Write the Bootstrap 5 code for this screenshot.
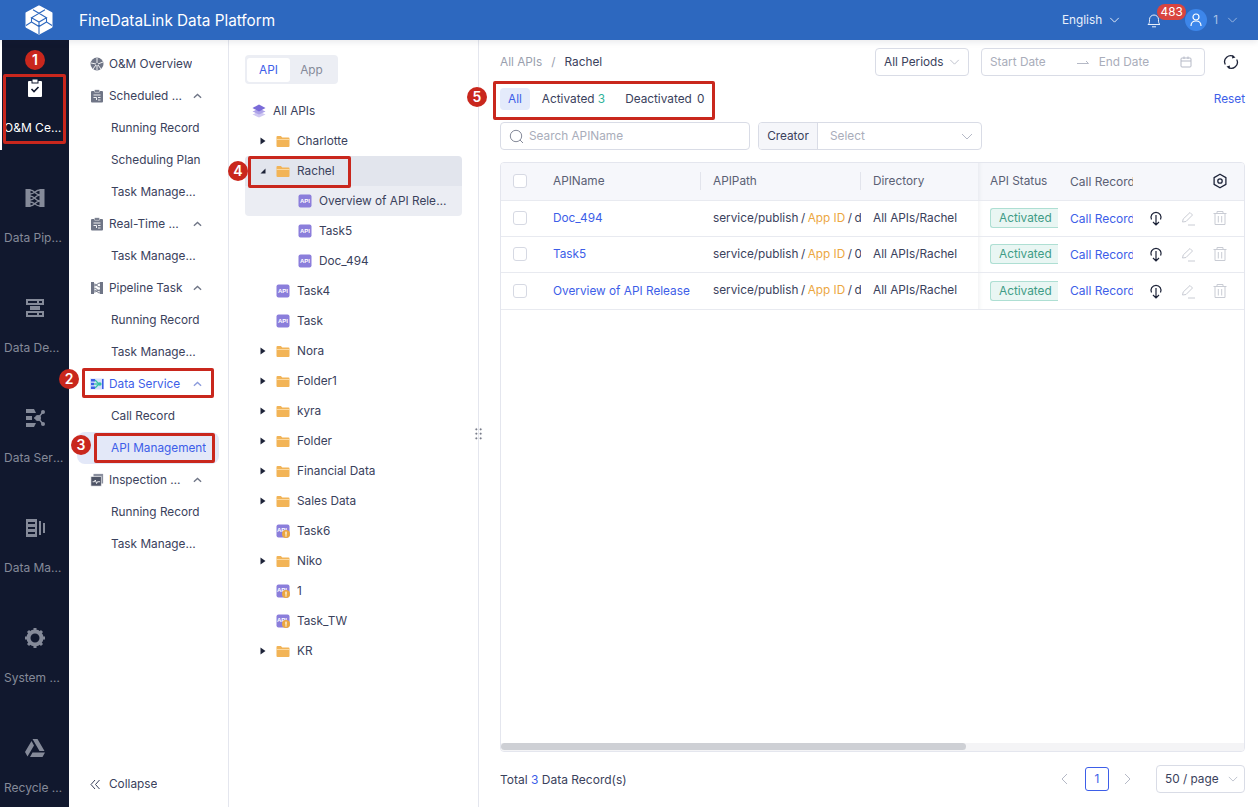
<!DOCTYPE html>
<html lang="en">
<head>
<meta charset="utf-8">
<title>FineDataLink Data Platform</title>
<link href="https://cdn.jsdelivr.net/npm/bootstrap@5.3.0/dist/css/bootstrap.min.css" rel="stylesheet">
<style>
html,body{height:100%;margin:0;overflow:hidden}
body{font-family:Inter,"Liberation Sans",sans-serif;font-size:11.8px;line-height:19px;color:#3a415c;background:#fff;width:1258px;height:807px;position:relative}
svg{display:block;flex:none}
.shell{height:807px}
.topbar{height:40px;background:#2d68bf;color:#fff;padding:0 20px 0 25px;box-shadow:0 2px 6px rgba(30,40,70,.1);position:relative;z-index:2;flex:none}
.brand{font-size:15.3px;margin-left:26px}
.lang{font-size:11.8px;color:#e9f0fb}
.bell{position:relative;margin-left:27px;margin-right:20px;width:18px}
.bell-count{position:absolute;left:10px;top:-9px;background:#d9443f;color:#fff;border-radius:8px;height:16px;width:29px;text-align:center;font-size:11.8px;line-height:16px}
.avatar{width:22px;height:22px;border-radius:50%;background:#3d86ea}
.user-no{color:#a9c2e6;margin:0 9px 0 6px}
.rail{width:69px;background:#11182e;flex:none}
.rail-item{height:110px;padding:38px 4px 0;text-align:center;color:#858a99;font-size:12px;line-height:20px}
.rail-item svg{margin:0 auto 20px}
.rail-item.on{color:#fff;box-shadow:inset 2px 0 0 #fff}
.rail-item div{white-space:nowrap;overflow:hidden;text-overflow:ellipsis}
.side{width:160px;flex:none;border-right:1px solid #e4e6ee;padding:8px 9px 7px 8px;color:#3a415c}
.side-row{height:32px;padding-left:13px}
.side-sub{height:32px;padding-left:34px;white-space:nowrap}
.side-sub span{display:block;width:91px;overflow:hidden;text-overflow:ellipsis}
.side-sub.on{background:#e3e8f8;border-radius:8px;color:#3d5ee8}
.side-sub.on span{width:auto}
.side-label{width:75px;margin-left:5px;white-space:nowrap;overflow:hidden;text-overflow:ellipsis}
.side-label.wide{width:auto}
.side-row.on{color:#3d5ee8}
.chev{margin-left:9px}
.tree{width:250px;flex:none;border-right:1px solid #e4e6ee;padding:15px 16px 0}
.seg{width:93px;height:29px;background:#eceef4;border-radius:4px;padding:3px 2px;margin-bottom:12px}
.seg-btn{width:43px;height:24px;text-align:center;line-height:24px;color:#858a99;border-radius:3px}
.seg-btn.on{background:#fff;color:#3d5ee8}
.t-row{height:30px;white-space:nowrap;color:#3a415c}
.t-all{padding-left:7px;gap:7px}
.t-l1{padding-left:13px}
.t-l2{padding-left:35px}
.t-slot{width:18px;flex:none}
.t-name{margin-left:7px;overflow:hidden;text-overflow:ellipsis;padding-right:12px}
.t-on{background:#e2e5ed;border-radius:4px 4px 0 0}
.t-on2{background:#ebedf3;border-radius:0 0 4px 4px}
.mainpane{padding:8px 13px 0 21px;min-width:0}
.crumbs{height:28px}
.crumb-a{color:#9a9fae}
.crumb-s{color:#9a9fae;margin:0 9px}
.crumb-b{color:#3a415c}
.field{height:28px;border:1px solid #d9dce6;border-radius:4px;background:#fff}
.f-period{width:94px;padding:0 8px;margin-left:auto}
.f-date{width:224px;margin-left:12px;padding:0 12px 0 8px;color:#a9adba}
.date-arrow{margin:0 10px 0 31px}
.date-cal{margin-left:auto}
.refresh{margin:0 6px 0 18px}
.tabs-line{margin-top:12px;height:22px}
.tabt{height:22px;line-height:22px;padding:0 8px;border-radius:4px}
.tabt.on{background:#e4ebfb;color:#3d5ee8}
.tabt+.tabt{margin-left:4px}
.tabt b{font-weight:400;color:#2fb39a}
.tabt i{font-style:normal;margin-left:2px}
.lnk{color:#3d5ee8}
.filters{margin-top:12px;height:28px}
.f-search{width:250px;padding:0 8px;color:#a9adba;gap:5px}
.f-creator{width:224px;margin-left:8px;color:#a9adba}
.creator-l{width:59px;height:26px;line-height:27px;text-align:center;background:#f5f6fa;border-right:1px solid #d9dce6;border-radius:3px 0 0 3px;color:#3a415c}
.sel-text{margin-left:12px}
.gridwrap{margin-top:12px;height:590px;border:1px solid #e4e6ee;border-radius:4px;overflow:hidden;position:relative}
.apitable{table-layout:fixed;width:743px;margin:0;--bs-table-color:#3a415c;--bs-table-bg:transparent}
.apitable th,.apitable td{padding:0;vertical-align:middle;font-weight:400;white-space:nowrap;overflow:hidden;border-bottom:1px solid #e8eaf0}
.apitable th{height:37px;background:#f6f7fb;color:#5a6074}
.apitable td{height:36px}
.apitable tr.tall td{height:37px}
.apitable td.nm{padding-top:1px}
.apitable .call{font-size:12px}
.cell-pad{padding-left:12px!important}
.head-sep{position:relative}
.head-sep::after{content:"";position:absolute;right:0;top:9px;height:18px;width:1px;background:#e2e4ec}
.apitable .fix-l{box-shadow:inset 5px 0 4px -4px rgba(40,50,80,.08)}
.chk{display:block;width:14px;height:14px;border:1px solid #d6d9e3;border-radius:3px;background:#fff;margin-left:12px}
.cut{display:block;overflow:hidden;white-space:nowrap}
.appid{color:#eca73f}
.sl{margin:0 2.5px}
.state{display:inline-block;height:20px;line-height:18px;padding:0 8px;background:#e9f6f3;border:1px solid #aedfd3;border-right:0;border-radius:3px 0 0 3px;color:#3f9c86;width:76px}
.acts{padding-left:15px;gap:16px}
.apitable th.gear{padding-left:79px}
.bar{position:absolute;left:0;right:0;bottom:0;height:8px;background:#f4f4f6}
.thumb{height:7px;width:465px;background:#ced0d5;border-radius:4px}
.foot{height:54px}
.foot-total{font-size:12px}
.pg-one{width:24px;height:24px;border:1px solid #3d5ee8;border-radius:3px;color:#3d5ee8;text-align:center;line-height:22px;margin:0 15px 0 17px}
.f-size{width:89px;margin-left:24px;padding:0 6px 0 8px}
.note-box{position:absolute;border:3px solid #c9271d;border-radius:2px;z-index:5}
.nb1{left:3px;top:74px;width:63px;height:70px}
.nb2{left:82px;top:368px;width:132px;height:30px}
.nb3{left:94px;top:433px;width:121px;height:30px}
.nb4{left:248px;top:156px;width:103px;height:32px}
.nb5{left:493px;top:81px;width:222px;height:39px}
.note-dot{position:absolute;width:20px;height:20px;border-radius:50%;background:#c9271d;color:#fff;font-size:14px;font-weight:600;line-height:20px;text-align:center;z-index:6}
.nd1{left:25px;top:50px}.nd2{left:59px;top:369px}.nd3{left:71px;top:435px}.nd4{left:228px;top:161px}.nd5{left:467px;top:87px}
.grip{position:absolute;left:474px;top:427px;width:9px;height:13px;z-index:3;background-image:radial-gradient(circle,#444a5c 0.8px,transparent 1px);background-size:4.5px 4.5px}
</style>
</head>
<body>
<svg width="0" height="0" style="position:absolute">
<defs>
<symbol id="api" viewBox="0 0 14 14"><rect x=".5" y=".5" width="13" height="13" rx="2" fill="#8b7edb"/><text x="7" y="9.4" font-size="6" font-weight="700" text-anchor="middle" fill="#fff" font-family="Liberation Sans">API</text></symbol>
<symbol id="apiw" viewBox="0 0 14 14"><rect x=".5" y=".5" width="13" height="13" rx="2" fill="#8b7edb"/><text x="6" y="7.6" font-size="6" font-weight="700" text-anchor="middle" fill="#fff" font-family="Liberation Sans">API</text><circle cx="10" cy="10" r="4" fill="#eca73f"/><rect x="9.4" y="7.6" width="1.2" height="3.2" fill="#fff"/><rect x="9.4" y="11.3" width="1.2" height="1.2" fill="#fff"/></symbol>
<symbol id="folder" viewBox="0 0 14 14"><path d="M.5 3a1 1 0 0 1 1-1h3.4l1.4 1.6h6.2a1 1 0 0 1 1 1V12a1 1 0 0 1-1 1h-11a1 1 0 0 1-1-1z" fill="#f2b457"/><rect x=".5" y="5" width="13" height=".8" fill="#fde3b4"/></symbol>
<symbol id="cr" viewBox="0 0 8 8"><path d="M1.5 0.5 6.5 4 1.5 7.5z" fill="#1d2338"/></symbol>
<symbol id="up" viewBox="0 0 10 6"><path d="M1 5 5 1.3 9 5" fill="none" stroke="#6f7586" stroke-width="1.5"/></symbol>
<symbol id="upb" viewBox="0 0 10 6"><path d="M1 5 5 1.3 9 5" fill="none" stroke="#8b9bdc" stroke-width="1.5"/></symbol>
<symbol id="dn" viewBox="0 0 12 7"><path d="M1 1 6 6 11 1" fill="none" stroke="currentColor" stroke-width="1"/></symbol>
<symbol id="clip" viewBox="0 0 14 14"><rect x="1" y="2" width="12" height="11.5" rx="1" fill="#6f7586"/><rect x="4.5" y=".7" width="5" height="2.6" rx=".5" fill="#6f7586" stroke="#fff" stroke-width=".5"/><path d="M3.5 6h7M3.5 8.500h3v2.500M8 8.500h2.500M8 11h2.500" stroke="#fff" stroke-width=".9" fill="none"/></symbol>
<symbol id="ppl" viewBox="0 0 14 14"><rect x="1" y="1" width="3" height="12" fill="#6f7586"/><rect x="10" y="1" width="3" height="12" fill="#6f7586"/><path d="M4 3c3 0 3 3 6 3M4 7c3 0 3 3 6 3M4 11c3 0 3-2 6-2M4 5c3 0 3-3 6-3M4 9c3 0 3 3 6 3" stroke="#6f7586" stroke-width="1" fill="none"/></symbol>
<symbol id="act" viewBox="0 0 16 16"><path d="M4 1h11v11H4z" fill="#8a8f9e"/><path d="M1 4h12v11H1z" fill="#4e5466" stroke="#fff" stroke-width=".7"/><path d="M3 10h2l1-2 1.500 4 1-2h3" stroke="#fff" fill="none"/></symbol>
<symbol id="svc" viewBox="0 0 14 14"><rect x="0" y="1.500" width="14" height="11" fill="#d8e0fb"/><rect x="1" y="2" width="4" height="2.500" fill="#3d5ee8"/><rect x="1" y="9.500" width="4" height="2.500" fill="#3d5ee8"/><rect x="1" y="5.800" width="3" height="2.400" fill="#3d5ee8"/><path d="M5 3 9 7 5 11" stroke="#37c3a2" stroke-width="1.300" fill="none"/><path d="M4 7h6" stroke="#37c3a2" stroke-width="1.300"/><circle cx="9.800" cy="7" r="1.800" fill="#37c3a2"/><rect x="12" y="2" width="1.500" height="10" fill="#3d5ee8"/></symbol>
</defs>
</svg>

<div class="shell d-flex flex-column">
  <header class="topbar d-flex align-items-center">
    <svg width="28" height="30" viewBox="0 0 28 30"><path d="M14 1.500 26.500 8.200v13.600L14 28.500 1.500 21.800V8.200z" fill="#fff" stroke="#fff" stroke-width="2" stroke-linejoin="round"/><path d="M8 4.800 14 8.300 20 4.800M14 8.300 21.500 12.700 14 17 6.500 12.700zM14 17V29M6.500 12.700V17L1 20.500M21.500 12.700V17L27 20.500M6.500 17l7.500 4.500 7.500-4.500" fill="none" stroke="#2d68bf" stroke-width="1.100"/></svg>
    <div class="brand">FineDataLink Data Platform</div>
    <div class="ms-auto d-flex align-items-center">
      <span class="lang">English</span>
      <svg class="text-white" style="margin-left:7px" width="11" height="6" viewBox="0 0 12 7"><use href="#dn"/></svg>
      <div class="bell">
        <svg width="14" height="15" viewBox="0 0 14 15"><path d="M1 11.500c1.500-1 1.500-2.500 1.500-5a4.500 4.500 0 0 1 9 0c0 2.500 0 4 1.500 5zM5 13.800h4" fill="none" stroke="#e9f0fb" stroke-width="1"/></svg>
        <span class="bell-count">483</span>
      </div>
      <span class="avatar d-flex align-items-center justify-content-center"><svg width="12" height="14" viewBox="0 0 12 14"><circle cx="6" cy="4" r="3" fill="none" stroke="#fff" stroke-width="1.200"/><path d="M1 13c0-3 2-5 5-5s5 2 5 5" fill="none" stroke="#fff" stroke-width="1.200"/></svg></span>
      <span class="user-no">1</span>
      <svg style="color:#a9c2e6" width="11" height="6" viewBox="0 0 12 7"><use href="#dn"/></svg>
    </div>
  </header>

  <div class="d-flex flex-grow-1" style="min-height:0">
    <nav class="rail">
      <div class="rail-item on">
        <svg width="20" height="20" viewBox="0 0 20 20"><rect x="3" y="3" width="14" height="16" rx="1" fill="#fff"/><rect x="7" y="1" width="6" height="4" fill="#fff" stroke="#11182e"/><path d="M6.500 11 9 13.500l4.500-4.500" fill="none" stroke="#11182e" stroke-width="1.600"/></svg>
        <div>O&amp;M Center</div>
      </div>
      <div class="rail-item">
        <svg width="20" height="20" viewBox="0 0 20 20"><rect x="0.500" y="1" width="5" height="18" fill="#858a99"/><rect x="14.500" y="1" width="5" height="18" fill="#858a99"/><path d="M5 2c5 0 5 5 10 5M5 8c5 0 5 5 10 5M5 14c5 0 5 4 10 4M5 6c5 0 5-4 10-4M5 12c5 0 5-5 10-5M5 18c5 0 5-5 10-5" stroke="#858a99" stroke-width="1.400" fill="none"/></svg>
        <div>Data Pipeline</div>
      </div>
      <div class="rail-item">
        <svg width="20" height="20" viewBox="0 0 20 20"><g fill="#858a99"><path d="M1 1h18v6H1zM3 3v2h9V3zM14 3v2h3V3z" fill-rule="evenodd"/><path d="M5 8h10v4H5z"/><path d="M1 13h18v6H1zM3 15v2h9v-2zM14 15v2h3v-2z" fill-rule="evenodd"/></g></svg>
        <div>Data Development</div>
      </div>
      <div class="rail-item">
        <svg width="20" height="20" viewBox="0 0 20 20"><g fill="#858a99"><path d="M1 1h8l2 4H1zM1 15h10l-2 4H1zM1 8h6v4H1z"/><circle cx="13" cy="10" r="3"/><circle cx="18" cy="4" r="2"/><circle cx="18" cy="16" r="2"/></g><path d="M9 10h4M13 10l5-6M13 10l5 6" stroke="#858a99" stroke-width="1.500" fill="none"/></svg>
        <div>Data Service</div>
      </div>
      <div class="rail-item">
        <svg width="20" height="20" viewBox="0 0 20 20"><g fill="#858a99"><path d="M1 1h11v18H1zM3 4v2h7V4zM3 9v2h7V9zM3 14v2h7v-2z" fill-rule="evenodd"/><rect x="14" y="3" width="2" height="14"/><rect x="18" y="5" width="2" height="10"/></g></svg>
        <div>Data Management</div>
      </div>
      <div class="rail-item">
        <svg width="20" height="20" viewBox="0 0 20 20"><circle cx="10" cy="10" r="6.500" fill="none" stroke="#858a99" stroke-width="4"/><path d="M10 0v4M10 16v4M0 10h4M16 10h4M3 3l3 3M14 14l3 3M3 17l3-3M14 6l3-3" stroke="#858a99" stroke-width="3"/></svg>
        <div>System Management</div>
      </div>
      <div class="rail-item">
        <svg width="20" height="20" viewBox="0 0 20 20"><path d="M7.500 1h5l7 12h-5zM6.500 3 0 14l2.500 4.500L9 7.500zM5 19l2.500-4.500H20L17.500 19z" fill="#858a99"/></svg>
        <div>Recycle Bin</div>
      </div>
    </nav>

    <aside class="side d-flex flex-column">
      <div class="side-row d-flex align-items-center"><svg width="14" height="14" viewBox="0 0 14 14"><circle cx="7" cy="7" r="6.500" fill="#6f7586"/><path d="M7 1v5M7 8v5M1 6l5 1M8 7l5-2M3 12l3-4M8 8l3 4" stroke="#fff" stroke-width=".9"/></svg><span class="side-label wide">O&amp;M Overview</span></div>
      <div class="side-row d-flex align-items-center"><svg width="14" height="14"><use href="#clip"/></svg><span class="side-label">Scheduled Task</span><svg class="chev" width="9" height="6"><use href="#up"/></svg></div>
      <div class="side-sub d-flex align-items-center"><span>Running Record</span></div>
      <div class="side-sub d-flex align-items-center"><span>Scheduling Plan</span></div>
      <div class="side-sub d-flex align-items-center"><span>Task Management</span></div>
      <div class="side-row d-flex align-items-center"><svg width="14" height="14"><use href="#clip"/></svg><span class="side-label">Real-Time Task</span><svg class="chev" width="9" height="6"><use href="#up"/></svg></div>
      <div class="side-sub d-flex align-items-center"><span>Task Management</span></div>
      <div class="side-row d-flex align-items-center"><svg width="14" height="14"><use href="#ppl"/></svg><span class="side-label">Pipeline Task</span><svg class="chev" width="9" height="6"><use href="#up"/></svg></div>
      <div class="side-sub d-flex align-items-center"><span>Running Record</span></div>
      <div class="side-sub d-flex align-items-center"><span>Task Management</span></div>
      <div class="side-row on d-flex align-items-center"><svg width="14" height="14"><use href="#svc"/></svg><span class="side-label">Data Service</span><svg class="chev" width="9" height="6"><use href="#upb"/></svg></div>
      <div class="side-sub d-flex align-items-center"><span>Call Record</span></div>
      <div class="side-sub on d-flex align-items-center"><span>API Management</span></div>
      <div class="side-row d-flex align-items-center"><svg width="14" height="14"><use href="#act"/></svg><span class="side-label">Inspection Task</span><svg class="chev" width="9" height="6"><use href="#up"/></svg></div>
      <div class="side-sub d-flex align-items-center"><span>Running Record</span></div>
      <div class="side-sub d-flex align-items-center"><span>Task Management</span></div>
      <div class="side-row d-flex align-items-center mt-auto"><svg width="11" height="11" viewBox="0 0 11 11"><path d="M5 1 1 5.500 5 10M9.500 1 5.500 5.500 9.500 10" fill="none" stroke="#3a415c" stroke-width="1"/></svg><span class="side-label wide" style="margin-left:8px">Collapse</span></div>
    </aside>

    <section class="tree">
      <div class="seg d-flex"><div class="seg-btn on">API</div><div class="seg-btn">App</div></div>
      <div class="t-row t-all d-flex align-items-center"><svg width="14" height="14" viewBox="0 0 14 14"><path d="M7 7.500 .5 10.500 7 13.500l6.500-3z" fill="#cfc8f2"/><path d="M7 4.500 .5 7.500 7 10.500l6.500-3z" fill="#ada2e8"/><path d="M7 .5.500 4 7 7.500 13.500 4z" fill="#7a6bd8"/></svg><span>All APIs</span></div>
      <div class="t-row t-l1 d-flex align-items-center"><span class="t-slot"><svg width="8" height="8" style="margin-left:1px"><use href="#cr"/></svg></span><svg width="14" height="14"><use href="#folder"/></svg><span class="t-name">Charlotte</span></div>
      <div class="t-row t-l1 t-on d-flex align-items-center"><span class="t-slot"><svg width="6" height="6" viewBox="0 0 6 6" style="margin-left:2px"><path d="M5.500.5V5.500H.5z" fill="#1d2338"/></svg></span><svg width="14" height="14"><use href="#folder"/></svg><span class="t-name">Rachel</span></div>
      <div class="t-row t-l2 t-on2 d-flex align-items-center"><span class="t-slot"></span><svg width="14" height="14"><use href="#api"/></svg><span class="t-name">Overview of API Release</span></div>
      <div class="t-row t-l2 d-flex align-items-center"><span class="t-slot"></span><svg width="14" height="14"><use href="#api"/></svg><span class="t-name">Task5</span></div>
      <div class="t-row t-l2 d-flex align-items-center"><span class="t-slot"></span><svg width="14" height="14"><use href="#api"/></svg><span class="t-name">Doc_494</span></div>
      <div class="t-row t-l1 d-flex align-items-center"><span class="t-slot"></span><svg width="14" height="14"><use href="#api"/></svg><span class="t-name">Task4</span></div>
      <div class="t-row t-l1 d-flex align-items-center"><span class="t-slot"></span><svg width="14" height="14"><use href="#api"/></svg><span class="t-name">Task</span></div>
      <div class="t-row t-l1 d-flex align-items-center"><span class="t-slot"><svg width="8" height="8" style="margin-left:1px"><use href="#cr"/></svg></span><svg width="14" height="14"><use href="#folder"/></svg><span class="t-name">Nora</span></div>
      <div class="t-row t-l1 d-flex align-items-center"><span class="t-slot"><svg width="8" height="8" style="margin-left:1px"><use href="#cr"/></svg></span><svg width="14" height="14"><use href="#folder"/></svg><span class="t-name">Folder1</span></div>
      <div class="t-row t-l1 d-flex align-items-center"><span class="t-slot"><svg width="8" height="8" style="margin-left:1px"><use href="#cr"/></svg></span><svg width="14" height="14"><use href="#folder"/></svg><span class="t-name">kyra</span></div>
      <div class="t-row t-l1 d-flex align-items-center"><span class="t-slot"><svg width="8" height="8" style="margin-left:1px"><use href="#cr"/></svg></span><svg width="14" height="14"><use href="#folder"/></svg><span class="t-name">Folder</span></div>
      <div class="t-row t-l1 d-flex align-items-center"><span class="t-slot"><svg width="8" height="8" style="margin-left:1px"><use href="#cr"/></svg></span><svg width="14" height="14"><use href="#folder"/></svg><span class="t-name">Financial Data</span></div>
      <div class="t-row t-l1 d-flex align-items-center"><span class="t-slot"><svg width="8" height="8" style="margin-left:1px"><use href="#cr"/></svg></span><svg width="14" height="14"><use href="#folder"/></svg><span class="t-name">Sales Data</span></div>
      <div class="t-row t-l1 d-flex align-items-center"><span class="t-slot"></span><svg width="14" height="14"><use href="#apiw"/></svg><span class="t-name">Task6</span></div>
      <div class="t-row t-l1 d-flex align-items-center"><span class="t-slot"><svg width="8" height="8" style="margin-left:1px"><use href="#cr"/></svg></span><svg width="14" height="14"><use href="#folder"/></svg><span class="t-name">Niko</span></div>
      <div class="t-row t-l1 d-flex align-items-center"><span class="t-slot"></span><svg width="14" height="14"><use href="#apiw"/></svg><span class="t-name">1</span></div>
      <div class="t-row t-l1 d-flex align-items-center"><span class="t-slot"></span><svg width="14" height="14"><use href="#apiw"/></svg><span class="t-name">Task_TW</span></div>
      <div class="t-row t-l1 d-flex align-items-center"><span class="t-slot"><svg width="8" height="8" style="margin-left:1px"><use href="#cr"/></svg></span><svg width="14" height="14"><use href="#folder"/></svg><span class="t-name">KR</span></div>
    </section>

    <main class="mainpane flex-grow-1 d-flex flex-column">
      <div class="crumbs d-flex align-items-center">
        <span class="crumb-a">All APIs</span><span class="crumb-s">/</span><span class="crumb-b">Rachel</span>
        <div class="field f-period d-flex align-items-center justify-content-between"><span>All Periods</span><svg style="color:#b5b9c6" width="11" height="6" viewBox="0 0 12 7"><use href="#dn"/></svg></div>
        <div class="field f-date d-flex align-items-center">
          <span>Start Date</span>
          <svg class="date-arrow" width="12" height="6" viewBox="0 0 12 6"><path d="M0 4.500h11.500L9 2" fill="none" stroke="#b5b9c6"/></svg>
          <span>End Date</span>
          <svg class="date-cal" width="12" height="12" viewBox="0 0 12 12"><rect x="1" y="2" width="10" height="9" rx="1" fill="none" stroke="#b5b9c6"/><path d="M1 5h10M4 .5v2.500M8 .5v2.500" stroke="#b5b9c6"/></svg>
        </div>
        <svg class="refresh" width="16" height="16" viewBox="0 0 16 16"><path d="M2.300 10.500A6 6 0 0 1 11 2.800M13.700 5.500A6 6 0 0 1 5 13.200" fill="none" stroke="#1d2338" stroke-width="1.300"/><path d="M9.500 1 12.500 3.500 9 4.500zM6.500 15 3.500 12.500 7 11.500z" fill="#1d2338"/></svg>
      </div>
      <div class="tabs-line d-flex align-items-center">
        <div class="tabt on">All</div>
        <div class="tabt">Activated <b>3</b></div>
        <div class="tabt">Deactivated <i>0</i></div>
        <span class="lnk ms-auto">Reset</span>
      </div>
      <div class="filters d-flex">
        <div class="field f-search d-flex align-items-center"><svg width="15" height="15" viewBox="0 0 15 15"><circle cx="7" cy="7" r="5.700" fill="none" stroke="#858a99"/><path d="M11 11l3 3" stroke="#858a99"/></svg><span>Search APIName</span></div>
        <div class="field f-creator d-flex align-items-center"><span class="creator-l">Creator</span><span class="sel-text me-auto">Select</span><svg class="me-2" style="color:#b5b9c6" width="12" height="7" viewBox="0 0 12 7"><use href="#dn"/></svg></div>
      </div>
      <div class="gridwrap">
        <table class="table apitable">
          <colgroup><col style="width:40px"><col style="width:160px"><col style="width:160px"><col style="width:117px"><col style="width:80px"><col style="width:75px"><col></colgroup>
          <thead><tr>
            <th><span class="chk"></span></th><th class="cell-pad head-sep">APIName</th><th class="cell-pad head-sep">APIPath</th><th class="cell-pad">Directory</th>
            <th class="cell-pad fix-l">API Status</th><th class="cell-pad call">Call Record</th>
            <th class="gear"><svg width="16" height="16" viewBox="0 0 16 16"><path d="M8 1.200 13.900 4.600V11.400L8 14.800 2.100 11.400V4.600z" fill="none" stroke="#1d2338" stroke-width="1.300" stroke-linejoin="round"/><circle cx="8" cy="8" r="2.200" fill="none" stroke="#1d2338" stroke-width="1.300"/></svg></th>
          </tr></thead>
          <tbody>
            <tr><td><span class="chk"></span></td><td class="cell-pad lnk nm">Doc_494</td><td class="cell-pad"><span class="cut">service/publish<span class="sl">/</span><span class="appid">App ID</span><span class="sl">/</span>d</span></td><td class="cell-pad">All APIs/Rachel</td><td class="cell-pad fix-l"><span class="state">Activated</span></td><td class="cell-pad lnk call">Call Record</td><td><div class="acts d-flex align-items-center">
              <svg width="16" height="16" viewBox="0 0 16 16"><path d="M3.500 9.500A5 5 0 1 1 12.500 9.500M8 5v10M5 12l3 3 3-3" fill="none" stroke="#1d2338" stroke-width="1.200"/></svg>
              <svg width="16" height="16" viewBox="0 0 16 16"><path d="M2.500 12 3.200 9 10 2.500l2.500 2.500L6 11.500zM8 15h7" fill="none" stroke="#c9ccd4"/></svg>
              <svg width="16" height="16" viewBox="0 0 16 16"><path d="M1.500 3.500h13M5 3.500V1.500h6v2M3 3.500V14.500h10V3.500M6.300 6v6.500M9.700 6v6.500" fill="none" stroke="#c9ccd4"/></svg>
            </div></td></tr>
            <tr><td><span class="chk"></span></td><td class="cell-pad lnk nm">Task5</td><td class="cell-pad"><span class="cut">service/publish<span class="sl">/</span><span class="appid">App ID</span><span class="sl">/</span>0</span></td><td class="cell-pad">All APIs/Rachel</td><td class="cell-pad fix-l"><span class="state">Activated</span></td><td class="cell-pad lnk call">Call Record</td><td><div class="acts d-flex align-items-center">
              <svg width="16" height="16" viewBox="0 0 16 16"><path d="M3.500 9.500A5 5 0 1 1 12.500 9.500M8 5v10M5 12l3 3 3-3" fill="none" stroke="#1d2338" stroke-width="1.200"/></svg>
              <svg width="16" height="16" viewBox="0 0 16 16"><path d="M2.500 12 3.200 9 10 2.500l2.500 2.500L6 11.500zM8 15h7" fill="none" stroke="#c9ccd4"/></svg>
              <svg width="16" height="16" viewBox="0 0 16 16"><path d="M1.500 3.500h13M5 3.500V1.500h6v2M3 3.500V14.500h10V3.500M6.300 6v6.500M9.700 6v6.500" fill="none" stroke="#c9ccd4"/></svg>
            </div></td></tr>
            <tr class="tall"><td><span class="chk"></span></td><td class="cell-pad lnk nm">Overview of API Release</td><td class="cell-pad"><span class="cut">service/publish<span class="sl">/</span><span class="appid">App ID</span><span class="sl">/</span>d</span></td><td class="cell-pad">All APIs/Rachel</td><td class="cell-pad fix-l"><span class="state">Activated</span></td><td class="cell-pad lnk call">Call Record</td><td><div class="acts d-flex align-items-center">
              <svg width="16" height="16" viewBox="0 0 16 16"><path d="M3.500 9.500A5 5 0 1 1 12.500 9.500M8 5v10M5 12l3 3 3-3" fill="none" stroke="#1d2338" stroke-width="1.200"/></svg>
              <svg width="16" height="16" viewBox="0 0 16 16"><path d="M2.500 12 3.200 9 10 2.500l2.500 2.500L6 11.500zM8 15h7" fill="none" stroke="#c9ccd4"/></svg>
              <svg width="16" height="16" viewBox="0 0 16 16"><path d="M1.500 3.500h13M5 3.500V1.500h6v2M3 3.500V14.500h10V3.500M6.300 6v6.500M9.700 6v6.500" fill="none" stroke="#c9ccd4"/></svg>
            </div></td></tr>
          </tbody>
        </table>
        <div class="bar"><div class="thumb"></div></div>
      </div>
      <div class="foot d-flex align-items-center">
        <span class="foot-total">Total <span class="lnk">3</span> Data Record(s)</span>
        <div class="ms-auto d-flex align-items-center">
          <svg width="8" height="12" viewBox="0 0 8 12"><path d="M7 1 2 6l5 5" fill="none" stroke="#b5b9c6"/></svg>
          <span class="pg-one">1</span>
          <svg width="8" height="12" viewBox="0 0 8 12"><path d="M1 1l5 5-5 5" fill="none" stroke="#b5b9c6"/></svg>
          <div class="field f-size d-flex align-items-center justify-content-between"><span>50 / page</span><svg style="color:#b5b9c6" width="10" height="6" viewBox="0 0 12 7"><use href="#dn"/></svg></div>
        </div>
      </div>
    </main>
  </div>
</div>

<div class="grip"></div>
<div class="note-box nb1"></div><div class="note-dot nd1">1</div>
<div class="note-box nb2"></div><div class="note-dot nd2">2</div>
<div class="note-box nb3"></div><div class="note-dot nd3">3</div>
<div class="note-box nb4"></div><div class="note-dot nd4">4</div>
<div class="note-box nb5"></div><div class="note-dot nd5">5</div>
<script src="https://cdn.jsdelivr.net/npm/bootstrap@5.3.0/dist/js/bootstrap.bundle.min.js"></script>
</body>
</html>
